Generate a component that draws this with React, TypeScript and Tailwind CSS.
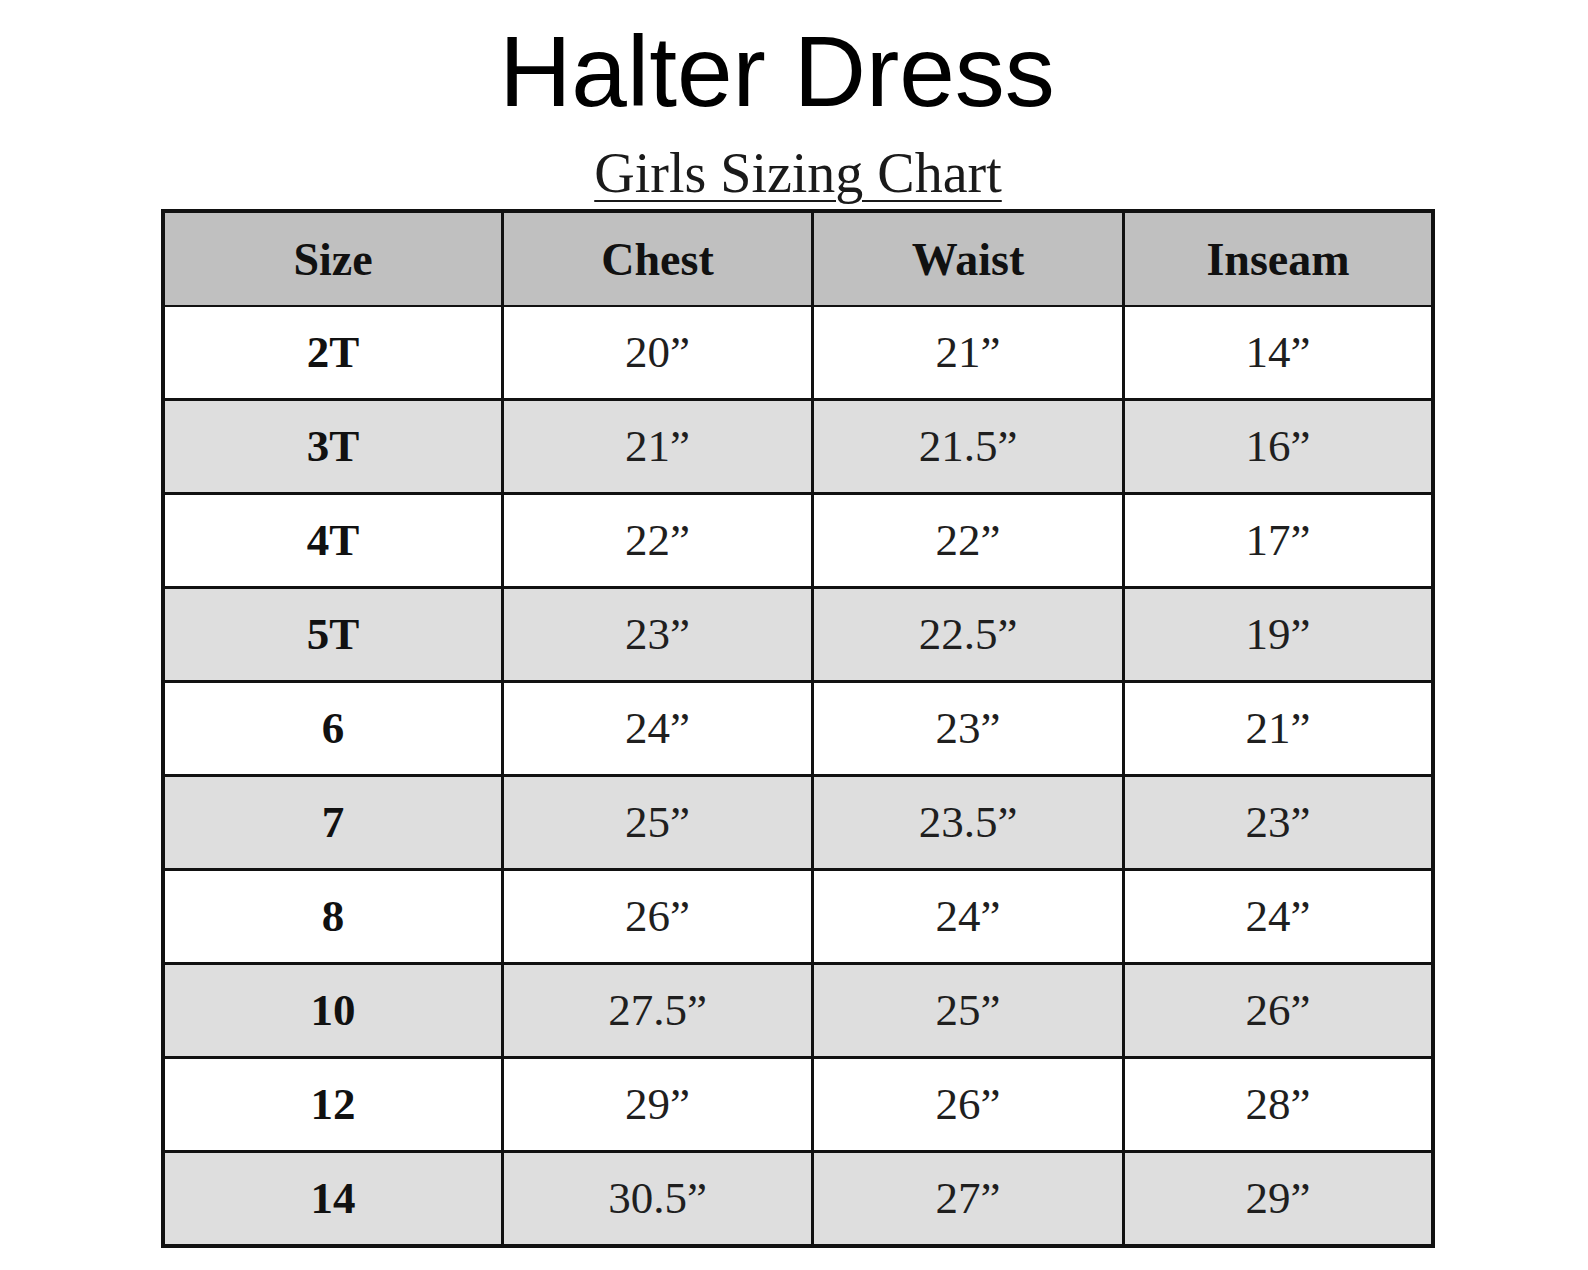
import React from "react";

const rows: [string, string, string, string][] = [
  ["2T", "20”", "21”", "14”"],
  ["3T", "21”", "21.5”", "16”"],
  ["4T", "22”", "22”", "17”"],
  ["5T", "23”", "22.5”", "19”"],
  ["6", "24”", "23”", "21”"],
  ["7", "25”", "23.5”", "23”"],
  ["8", "26”", "24”", "24”"],
  ["10", "27.5”", "25”", "26”"],
  ["12", "29”", "26”", "28”"],
  ["14", "30.5”", "27”", "29”"],
];

const serif = { fontFamily: '"Liberation Serif", "Times New Roman", serif' };

export default function App() {
  return (
    <div className="w-[1588px] h-[1270px] bg-white text-[#111] overflow-hidden">
      <div
        className="pt-[21px] h-[121px] text-center pr-[34px] text-[100px] leading-none text-black"
        style={{ fontFamily: '"Liberation Sans", Arial, sans-serif' }}
      >
        Halter Dress
      </div>
      <div
        className="mt-[24px] h-[56px] text-center pl-[8px] text-[56px] leading-none text-[#1a1a1a]"
        style={serif}
      >
        <span className="underline underline-offset-[8px] decoration-[2px]">Girls Sizing Chart</span>
      </div>
      <div className="mt-[8px] pl-[161px]" style={serif}>
        <div className="w-[1274px] bg-[#111] p-[4px] grid grid-cols-[336px_307px_308px_306px] auto-rows-[91px] gap-[3px]">
          {["Size", "Chest", "Waist", "Inseam"].map((h) => (
            <div
              key={h}
              className="bg-[#c0c0c0] h-[92px] flex items-center justify-center text-[46px] font-bold"
            >
              {h}
            </div>
          ))}
          {rows.map((r, i) =>
            r.map((c, j) => (
              <div
                key={`${i}-${j}`}
                className={`${i % 2 === 1 ? "bg-[#dedede]" : "bg-white"} flex items-center justify-center text-[45px] ${
                  j === 0 ? "font-bold" : "font-normal text-[#1f1f1f]"
                }`}
              >
                {c}
              </div>
            ))
          )}
        </div>
      </div>
    </div>
  );
}
